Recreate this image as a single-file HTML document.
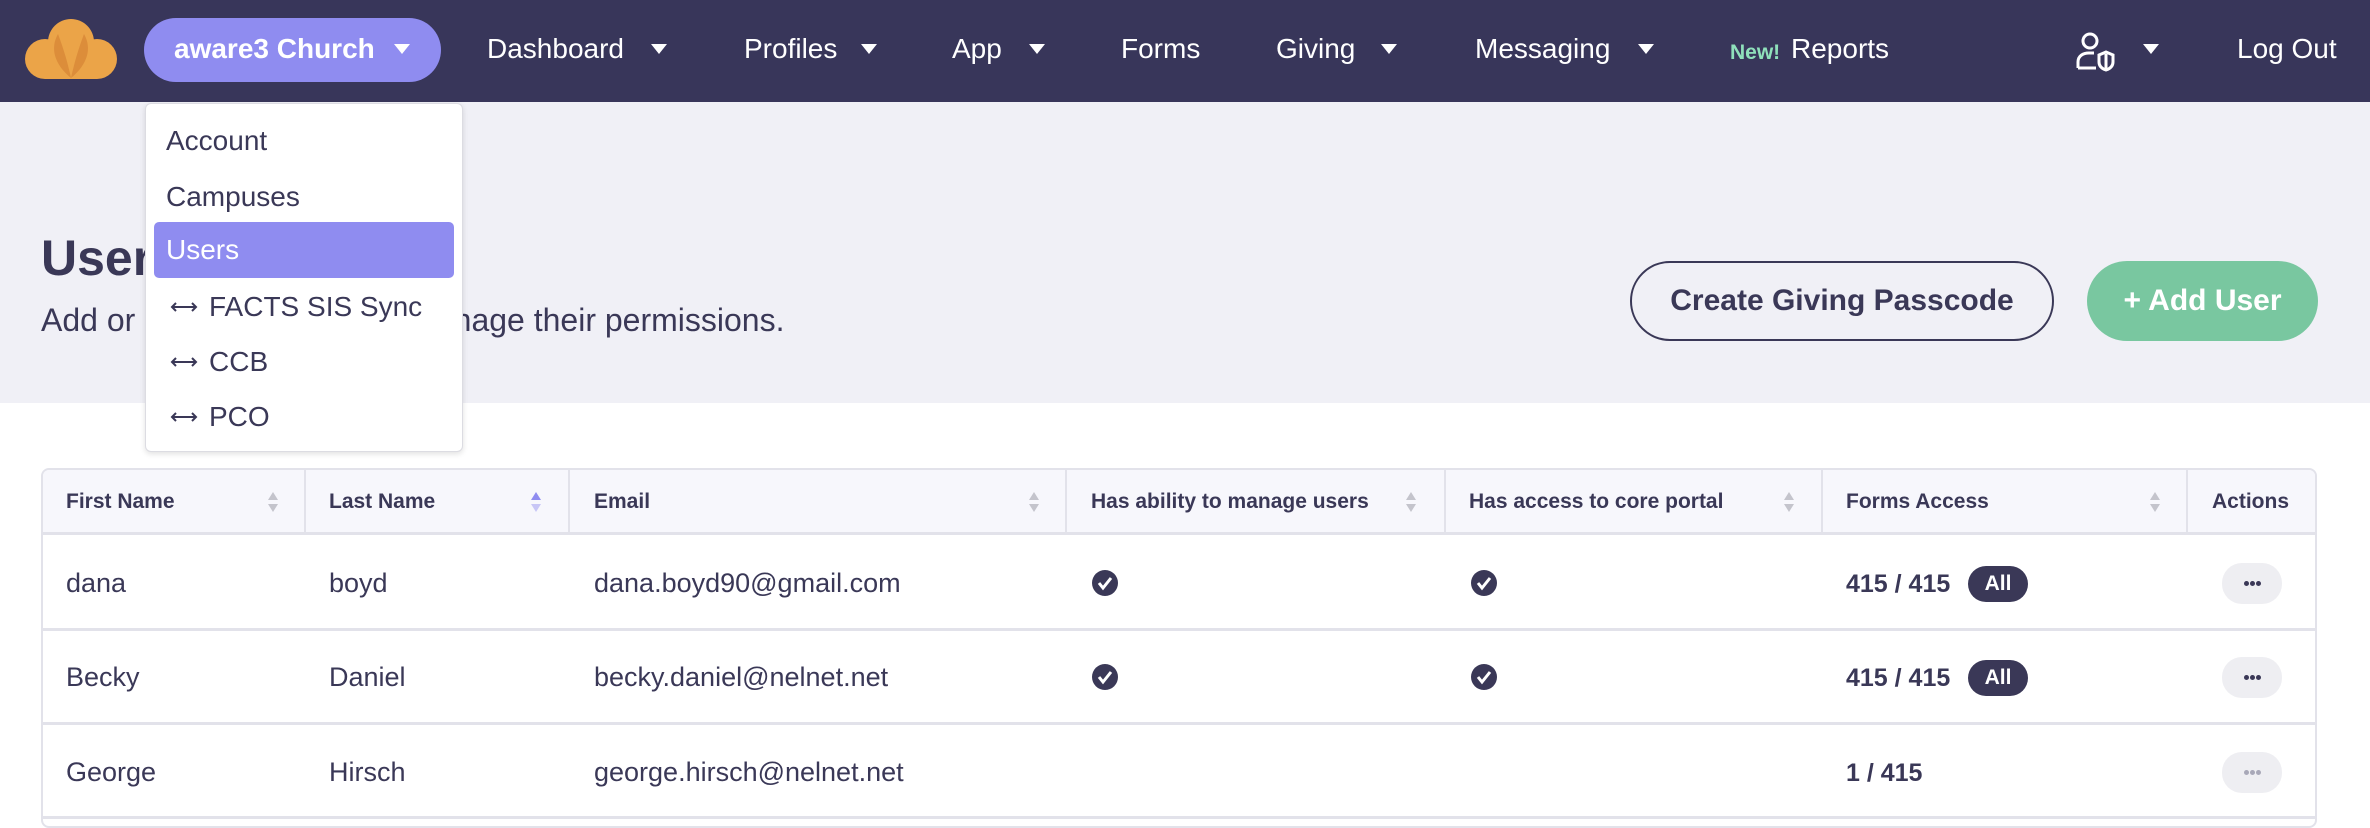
<!DOCTYPE html>
<html><head><meta charset="utf-8"><style>
*{margin:0;padding:0;box-sizing:border-box}
body{width:2370px;height:820px;overflow:hidden;background:#fff;font-family:"Liberation Sans",sans-serif;color:#3a3857;position:relative}
.a{position:absolute;white-space:nowrap}
.nav{position:absolute;left:0;top:0;width:2370px;height:102px;background:#38365a}
.ni{position:absolute;top:32px;color:#fff;font-size:28px;line-height:34px}
.car{position:absolute;top:44px;width:0;height:0;border-left:8px solid transparent;border-right:8px solid transparent;border-top:10px solid #fff}
.band{position:absolute;left:0;top:102px;width:2370px;height:301px;background:#f0f0f6}
.th{position:absolute;top:490px;font-size:21px;font-weight:bold;line-height:24px}
.td{position:absolute;font-size:27px;line-height:32px}
.vl{position:absolute;top:469px;width:2px;height:64px;background:#e2e2ea}
.hl{position:absolute;left:41px;width:2275px;height:3px;background:#e2e2ea}
.sort{position:absolute;top:491px;width:10px;height:22px}
.dd .it{position:absolute;left:166px;font-size:28px;line-height:34px}
.el{position:absolute;left:2222px;width:60px;height:41px;border-radius:20px;background:#eeeef2}
.el i{position:absolute;top:18px;width:5px;height:5px;border-radius:50%;background:#3a3857}
</style></head><body>
<div class="nav"></div>
<svg class="a" style="left:24px;top:18px" width="94" height="62" viewBox="0 0 94 62">
<circle cx="47" cy="24" r="23" fill="#eba448"/><circle cx="21" cy="41" r="20" fill="#eba448"/><circle cx="73" cy="41" r="20" fill="#eba448"/><rect x="21" y="30" width="52" height="31" fill="#eba448"/>
<path d="M47 60 C30 46 26 30 34 16 C40 32 44 46 47 60Z" fill="#dc8d3a"/><path d="M47 60 C64 46 68 30 60 16 C54 32 50 46 47 60Z" fill="#dc8d3a"/>
</svg>
<div class="a" style="left:144px;top:18px;width:297px;height:64px;border-radius:32px;background:#8f8cf0"></div>
<div class="ni" style="left:174px;font-weight:bold">aware3 Church</div>
<div class="car" style="left:394px"></div>
<div class="ni" style="left:487px">Dashboard</div><div class="car" style="left:651px"></div>
<div class="ni" style="left:744px">Profiles</div><div class="car" style="left:861px"></div>
<div class="ni" style="left:952px">App</div><div class="car" style="left:1029px"></div>
<div class="ni" style="left:1121px">Forms</div>
<div class="ni" style="left:1276px">Giving</div><div class="car" style="left:1381px"></div>
<div class="ni" style="left:1475px">Messaging</div><div class="car" style="left:1638px"></div>
<div class="ni" style="left:1730px;font-size:21px;font-weight:bold;color:#8fe0bb;top:36px">New!</div>
<div class="ni" style="left:1791px">Reports</div>
<svg class="a" style="left:2076px;top:32px" width="42" height="40" viewBox="0 0 42 40" fill="none" stroke="#fff" stroke-width="3">
<circle cx="14" cy="9" r="7"/><path d="M2 36 V30 C2 24 7 21 13 21 H18"/><path d="M2 36 H20"/><path d="M30 20 L37 23 V30 C37 35 33 37 30 38 C27 37 23 35 23 30 V23 Z"/><path d="M30 22 V37" /></svg>
<div class="car" style="left:2143px"></div>
<div class="ni" style="left:2237px">Log Out</div>

<div class="band"></div>
<div class="a" style="left:41px;top:228px;font-size:50px;font-weight:bold;line-height:60px">Users</div>
<div class="a" style="left:41px;top:301px;font-size:32px;line-height:38px">Add or remove users and manage their permissions.</div>
<div class="a" style="left:1630px;top:261px;width:424px;height:80px;border:2px solid #3a3857;border-radius:40px;font-size:30px;font-weight:bold;line-height:76px;text-align:center">Create Giving Passcode</div>
<div class="a" style="left:2087px;top:261px;width:231px;height:80px;background:#79c7a0;border-radius:40px;color:#fff;font-size:30px;font-weight:bold;line-height:80px;text-align:center">+ Add User</div>

<!-- table -->
<div class="a" style="left:41px;top:468px;width:2276px;height:360px;border:2px solid #e2e2ea;border-radius:8px;background:#fff"></div>
<div class="a" style="left:43px;top:470px;width:2272px;height:63px;background:#f7f7fc;border-radius:6px 6px 0 0"></div>
<div class="hl" style="top:532px"></div><div class="hl" style="top:628px"></div><div class="hl" style="top:722px"></div><div class="hl" style="top:816px"></div>
<div class="vl" style="left:304px"></div><div class="vl" style="left:568px"></div><div class="vl" style="left:1065px"></div><div class="vl" style="left:1444px"></div><div class="vl" style="left:1821px"></div><div class="vl" style="left:2186px"></div>
<div class="th" style="left:66px">First Name</div>
<div class="th" style="left:329px">Last Name</div>
<div class="th" style="left:594px">Email</div>
<div class="th" style="left:1091px">Has ability to manage users</div>
<div class="th" style="left:1469px">Has access to core portal</div>
<div class="th" style="left:1846px">Forms Access</div>
<div class="th" style="left:2212px">Actions</div>
<svg class="sort" style="left:268px" viewBox="0 0 10 22"><path d="M5 1 L10 9 H0Z" fill="#c4c4cc"/><path d="M5 21 L10 13 H0Z" fill="#c4c4cc"/></svg>
<svg class="sort" style="left:531px" viewBox="0 0 10 22"><path d="M5 1 L10 9 H0Z" fill="#8f8cf0"/><path d="M5 21 L10 13 H0Z" fill="#c8c6f6"/></svg>
<svg class="sort" style="left:1029px" viewBox="0 0 10 22"><path d="M5 1 L10 9 H0Z" fill="#c4c4cc"/><path d="M5 21 L10 13 H0Z" fill="#c4c4cc"/></svg>
<svg class="sort" style="left:1406px" viewBox="0 0 10 22"><path d="M5 1 L10 9 H0Z" fill="#c4c4cc"/><path d="M5 21 L10 13 H0Z" fill="#c4c4cc"/></svg>
<svg class="sort" style="left:1784px" viewBox="0 0 10 22"><path d="M5 1 L10 9 H0Z" fill="#c4c4cc"/><path d="M5 21 L10 13 H0Z" fill="#c4c4cc"/></svg>
<svg class="sort" style="left:2150px" viewBox="0 0 10 22"><path d="M5 1 L10 9 H0Z" fill="#c4c4cc"/><path d="M5 21 L10 13 H0Z" fill="#c4c4cc"/></svg>

<div class="td" style="left:66px;top:567px">dana</div>
<div class="td" style="left:329px;top:567px">boyd</div>
<div class="td" style="left:594px;top:567px">dana.boyd90@gmail.com</div>
<div class="td" style="left:66px;top:661px">Becky</div>
<div class="td" style="left:329px;top:661px">Daniel</div>
<div class="td" style="left:594px;top:661px">becky.daniel@nelnet.net</div>
<div class="td" style="left:66px;top:756px">George</div>
<div class="td" style="left:329px;top:756px">Hirsch</div>
<div class="td" style="left:594px;top:756px">george.hirsch@nelnet.net</div>

<svg class="a" style="left:1092px;top:570px" width="26" height="26" viewBox="0 0 26 26"><circle cx="13" cy="13" r="13" fill="#3a3857"/><path d="M7 13 L11 18 L19 8" stroke="#fff" stroke-width="3" fill="none"/></svg>
<svg class="a" style="left:1471px;top:570px" width="26" height="26" viewBox="0 0 26 26"><circle cx="13" cy="13" r="13" fill="#3a3857"/><path d="M7 13 L11 18 L19 8" stroke="#fff" stroke-width="3" fill="none"/></svg>
<svg class="a" style="left:1092px;top:664px" width="26" height="26" viewBox="0 0 26 26"><circle cx="13" cy="13" r="13" fill="#3a3857"/><path d="M7 13 L11 18 L19 8" stroke="#fff" stroke-width="3" fill="none"/></svg>
<svg class="a" style="left:1471px;top:664px" width="26" height="26" viewBox="0 0 26 26"><circle cx="13" cy="13" r="13" fill="#3a3857"/><path d="M7 13 L11 18 L19 8" stroke="#fff" stroke-width="3" fill="none"/></svg>

<div class="td" style="left:1846px;top:568px;font-weight:bold;font-size:25px">415 / 415</div>
<div class="a" style="left:1968px;top:566px;width:60px;height:36px;border-radius:18px;background:#3a3857;color:#fff;font-size:21px;font-weight:bold;line-height:36px;text-align:center">All</div>
<div class="td" style="left:1846px;top:662px;font-weight:bold;font-size:25px">415 / 415</div>
<div class="a" style="left:1968px;top:660px;width:60px;height:36px;border-radius:18px;background:#3a3857;color:#fff;font-size:21px;font-weight:bold;line-height:36px;text-align:center">All</div>
<div class="td" style="left:1846px;top:757px;font-weight:bold;font-size:25px">1 / 415</div>

<div class="el" style="top:563px"><i style="left:22px"></i><i style="left:28px"></i><i style="left:34px"></i></div>
<div class="el" style="top:657px"><i style="left:22px"></i><i style="left:28px"></i><i style="left:34px"></i></div>
<div class="el" style="top:752px"><i style="left:22px;background:#a8a8b8"></i><i style="left:28px;background:#a8a8b8"></i><i style="left:34px;background:#a8a8b8"></i></div>

<!-- dropdown -->
<div class="dd">
<div class="a" style="left:145px;top:103px;width:318px;height:349px;background:#fff;border:1px solid #dcdce2;border-radius:6px;box-shadow:0 2px 6px rgba(0,0,0,.12)"></div>
<div class="a" style="left:154px;top:222px;width:300px;height:56px;background:#8f8cf0;border-radius:5px"></div>
<div class="it" style="top:124px">Account</div>
<div class="it" style="top:180px">Campuses</div>
<div class="it" style="top:233px;color:#fff">Users</div>
<div class="it" style="top:290px;left:209px">FACTS SIS Sync</div>
<div class="it" style="top:345px;left:209px">CCB</div>
<div class="it" style="top:400px;left:209px">PCO</div>
<svg class="a" style="left:169px;top:300px" width="30" height="14" viewBox="0 0 30 14"><path d="M3 7 H27 M7 3 L3 7 L7 11 M23 3 L27 7 L23 11" stroke="#3a3857" stroke-width="2" fill="none"/></svg>
<svg class="a" style="left:169px;top:355px" width="30" height="14" viewBox="0 0 30 14"><path d="M3 7 H27 M7 3 L3 7 L7 11 M23 3 L27 7 L23 11" stroke="#3a3857" stroke-width="2" fill="none"/></svg>
<svg class="a" style="left:169px;top:410px" width="30" height="14" viewBox="0 0 30 14"><path d="M3 7 H27 M7 3 L3 7 L7 11 M23 3 L27 7 L23 11" stroke="#3a3857" stroke-width="2" fill="none"/></svg>
</div>
</body></html>
